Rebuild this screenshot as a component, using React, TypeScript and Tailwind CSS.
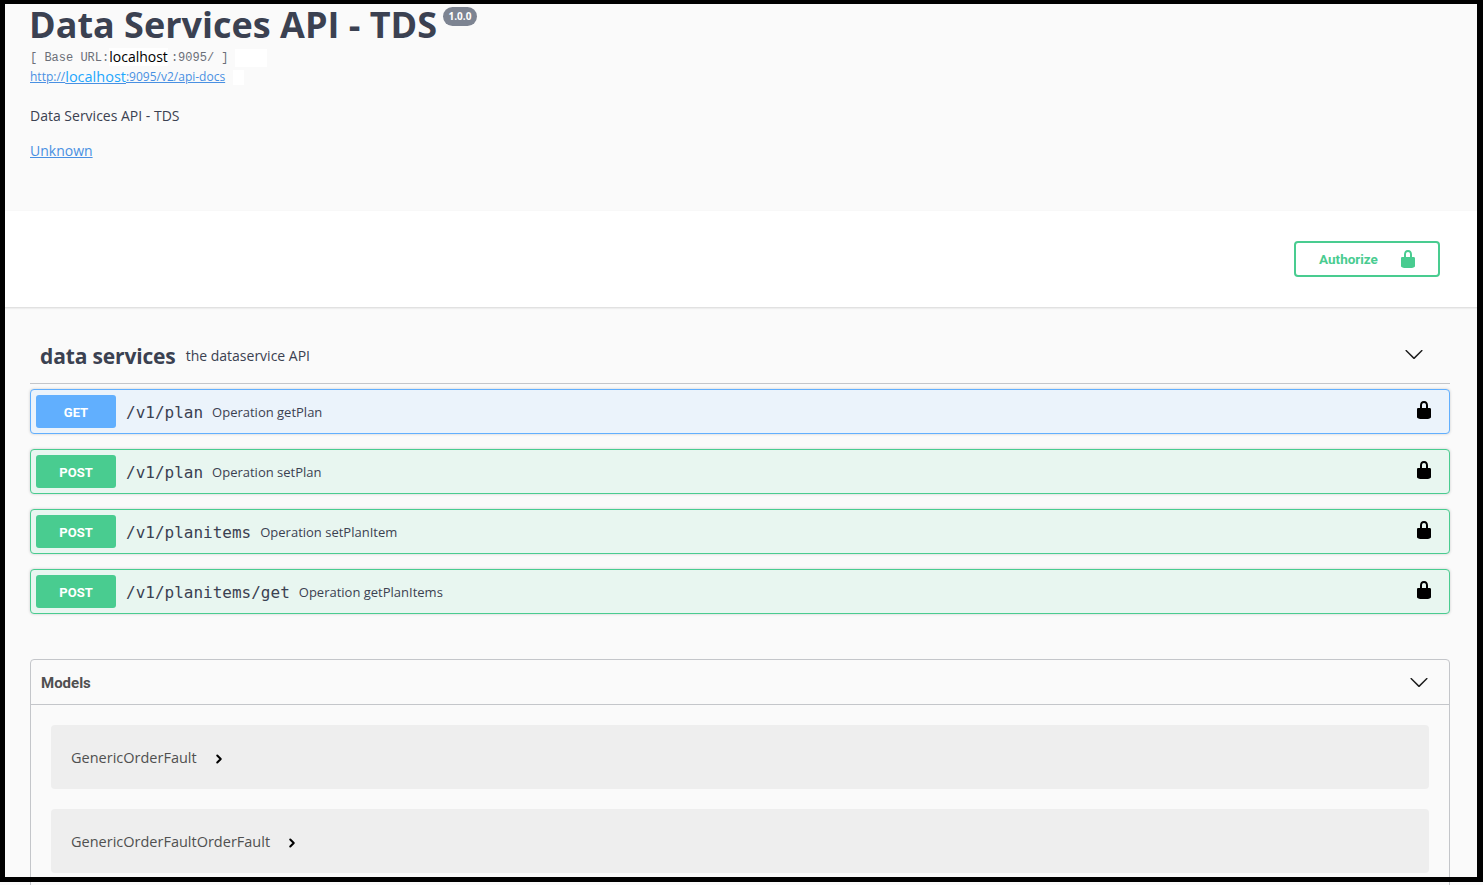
import React from 'react';
import { ChevronRight } from 'lucide-react';

const MONO = "font-['DejaVu_Sans_Mono',monospace]";

const operations = [
  { method: 'GET', path: '/v1/plan', summary: 'Operation getPlan', box: 'border-[#61affe] bg-[#ebf3fb]', badge: 'bg-[#61affe]' },
  { method: 'POST', path: '/v1/plan', summary: 'Operation setPlan', box: 'border-[#49cc90] bg-[#e8f6f0]', badge: 'bg-[#49cc90]' },
  { method: 'POST', path: '/v1/planitems', summary: 'Operation setPlanItem', box: 'border-[#49cc90] bg-[#e8f6f0]', badge: 'bg-[#49cc90]' },
  { method: 'POST', path: '/v1/planitems/get', summary: 'Operation getPlanItems', box: 'border-[#49cc90] bg-[#e8f6f0]', badge: 'bg-[#49cc90]' },
];

const models = ['GenericOrderFault', 'GenericOrderFaultOrderFault'];

const Lock = ({ className }: { className: string }) => (
  <svg viewBox="0 0 20 20" className={className} fill="currentColor">
    <path d="M15.8 8H14V5.6C14 2.703 12.665 1 10 1 7.334 1 6 2.703 6 5.6V8H4c-.553 0-1 .646-1 1.199V17c0 .549.428 1.139.951 1.307l1.197.387C5.672 18.861 6.55 19 7.1 19h5.8c.549 0 1.428-.139 1.951-.307l1.196-.387c.524-.167.953-.757.953-1.306V9.199C17 8.646 16.352 8 15.8 8zM12 8H8V5.199C8 3.754 8.797 3 10 3s2 .754 2 2.199V8z" />
  </svg>
);

const Caret = ({ className }: { className: string }) => (
  <svg viewBox="0 0 20 20" className={className} fill="currentColor">
    <path d="M17.418 6.109c.272-.268.709-.268.979 0s.271.701 0 .969l-7.908 7.83c-.27.268-.707.268-.979 0l-7.908-7.83c-.27-.268-.27-.701 0-.969.271-.268.709-.268.979 0L10 13.25l7.418-7.141z" />
  </svg>
);

export default function App() {
  return (
    <div className="relative h-[885px] w-full overflow-hidden bg-[#fafafa] font-['Open_Sans',sans-serif] text-[#3b4151]">
      {/* screenshot frame */}
      <div className="pointer-events-none absolute inset-x-0 top-0 z-10 h-[877px] border-t-4 border-r-[6px] border-b-0 border-l-[5px] border-black" />
      <div className="absolute inset-x-0 top-[877px] z-10 h-[5px] bg-black" />

      {/* Info */}
      <div className="h-[211px] pl-[30px] pt-1">
        <div className="flex items-start">
          <h1 className="-ml-px text-[36px] leading-[42px] font-bold whitespace-nowrap">Data Services API - TDS</h1>
          <span className="ml-[6px] mt-[3px] rounded-[57px] bg-[#7d8492] px-[5.5px] py-px text-[10px] leading-[17px] font-bold text-white">1.0.0</span>
        </div>
        <div className="mt-[3px] flex h-[18px] items-center">
          <span className="whitespace-pre font-['Liberation_Mono',monospace] text-[12px] text-[#6b6f78]">[ Base URL:</span>
          <span className="mb-[2px] bg-white text-[14px] leading-[18px] text-black">localhost</span>
          <span className="ml-[3px] whitespace-pre font-['Liberation_Mono',monospace] text-[12px] text-[#6b6f78]">:9095/ ]</span>
          <span className="ml-[7px] h-[18px] w-8 bg-white" />
        </div>
        <div className="mt-[1px] flex h-[18px] items-center text-[12px] text-[#4990e2] underline">
          <span>http://</span>
          <span className="mb-[1px] text-[14.5px] text-[#1ea7fd]">localhost</span>
          <span>:9095/v2/api-docs</span>
          <span className="ml-2 h-[15px] w-[11px] bg-white" />
        </div>
        <p className="mt-[20px] text-[14px] leading-[20px]">Data Services API - TDS</p>
        <p className="mt-[15px] text-[14px] leading-[20px] text-[#4990e2] underline">Unknown</p>
      </div>

      {/* Authorize bar */}
      <div className="flex h-[96px] items-center justify-end bg-white pr-[43px] shadow-[0_1px_2px_0_rgba(0,0,0,0.15)]">
        <button className="flex h-9 w-[146px] items-center rounded border-2 border-[#49cc90] pl-[23px] font-['Roboto',sans-serif] text-[13.5px] font-bold text-[#49cc90]">
          <span className="mt-px">Authorize</span>
          <Lock className="ml-[20px] h-5 w-5" />
        </button>
      </div>

      {/* Operations */}
      <div className="ml-[30px] mr-[33px] mt-[28px]">
        <div className="flex h-[49px] items-center border-b border-[#c4c6ca] pb-[7px] pl-[10px] pr-[26px]">
          <span className="mt-[2px] text-[21px] font-bold tracking-[-0.15px]">data services</span>
          <span className="ml-[10px] text-[14px]">the dataservice API</span>
          <Caret className="mb-[4px] ml-auto h-5 w-5 text-[#1c1c1c]" />
        </div>
        <div className="mt-[5px] flex flex-col gap-[15px]">
          {operations.map((op, i) => (
            <div key={i} className={`flex h-[45px] items-center rounded border pl-[5px] pr-[15px] shadow-[0_0_3px_rgba(0,0,0,0.19)] ${op.box}`}>
              <span className={`flex h-[33px] w-20 items-center justify-center rounded-[3px] pt-[2px] font-['Roboto',sans-serif] text-[13px] font-bold text-white ${op.badge}`}>{op.method}</span>
              <span className={`${MONO} ml-[10px] mt-[2px] text-[16px]`}>{op.path}</span>
              <span className="ml-[9px] mt-[2px] text-[13px]">{op.summary}</span>
              <Lock className="mb-[3px] ml-auto h-5 w-5 text-black" />
            </div>
          ))}
        </div>
      </div>

      {/* Models */}
      <div className="ml-[30px] mr-[33px] mt-[45px] rounded border border-[#c4c6ca]">
        <div className="flex h-[45px] items-center border-b border-[#c4c6ca] pl-[10px] pr-[20px]">
          <span className="mt-[2px] font-['Roboto',sans-serif] text-[15px] font-bold text-[#505050]">Models</span>
          <Caret className="ml-auto h-5 w-5 text-[#1c1c1c]" />
        </div>
        <div className="flex flex-col gap-5 px-5 py-5">
          {models.map(name => (
            <div key={name} className="flex h-16 items-center rounded bg-[#eeeeee] pl-5">
              <span className="mt-[2px] text-[14.5px] font-medium text-[#505050]">{name}</span>
              <ChevronRight className="ml-[15px] mt-[3px] h-[14px] w-[14px] text-black" strokeWidth={3.5} />
            </div>
          ))}
        </div>
      </div>
    </div>
  );
}
